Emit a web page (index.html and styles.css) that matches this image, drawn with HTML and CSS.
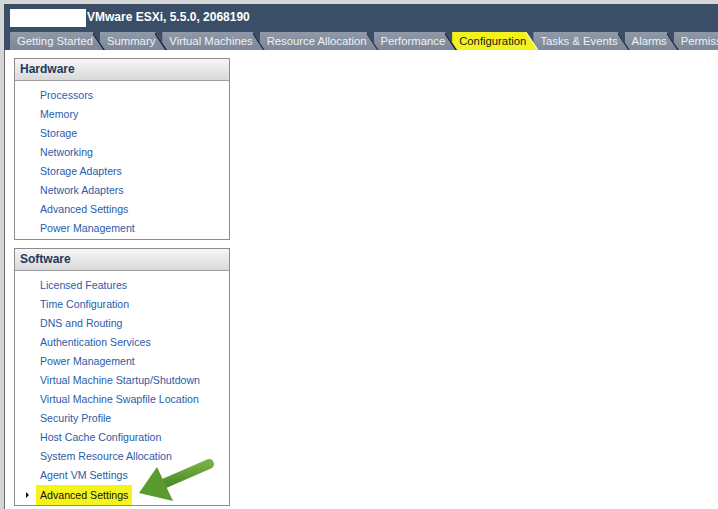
FILE: index.html
```html
<!DOCTYPE html>
<html>
<head>
<meta charset="utf-8">
<link rel="stylesheet" href="styles.css">
</head>
<body>
<div class="page">
  <header class="header">
    <div class="titlebar">
      <span class="redact"></span>
      <span class="title">VMware ESXi, 5.5.0, 2068190</span>
    </div>
    <nav class="tabs">
      <span class="tab">Getting Started</span>
      <span class="tab">Summary</span>
      <span class="tab">Virtual Machines</span>
      <span class="tab">Resource Allocation</span>
      <span class="tab">Performance</span>
      <span class="tab active">Configuration</span>
      <span class="tab">Tasks &amp; Events</span>
      <span class="tab">Alarms</span>
      <span class="tab">Permissions</span>
    </nav>
  </header>
  <main class="content">
    <section class="panel">
      <div class="panel-head">Hardware</div>
      <ul class="items">
        <li>Processors</li>
        <li>Memory</li>
        <li>Storage</li>
        <li>Networking</li>
        <li>Storage Adapters</li>
        <li>Network Adapters</li>
        <li>Advanced Settings</li>
        <li>Power Management</li>
      </ul>
    </section>
    <section class="panel">
      <div class="panel-head">Software</div>
      <ul class="items">
        <li>Licensed Features</li>
        <li>Time Configuration</li>
        <li>DNS and Routing</li>
        <li>Authentication Services</li>
        <li>Power Management</li>
        <li>Virtual Machine Startup/Shutdown</li>
        <li>Virtual Machine Swapfile Location</li>
        <li>Security Profile</li>
        <li>Host Cache Configuration</li>
        <li>System Resource Allocation</li>
        <li>Agent VM Settings</li>
        <li class="selected"><span class="marker"></span><span class="hl">Advanced Settings</span></li>
      </ul>
    </section>
  </main>
  <svg class="arrow" width="90" height="60" viewBox="130 455 90 60">
    <defs>
      <linearGradient id="g" x1="0" y1="0" x2="0" y2="1">
        <stop offset="0" stop-color="#74b043"/>
        <stop offset="1" stop-color="#4f8d27"/>
      </linearGradient>
    </defs>
    <line x1="209" y1="464" x2="163" y2="484" stroke="url(#g)" stroke-width="10" stroke-linecap="round"/>
    <polygon points="139,493 157,467 173,501" fill="#5a9a2f"/>
  </svg>
</div>
</body>
</html>
```
FILE: styles.css
```css
html, body {
  margin: 0;
  padding: 0;
}
body {
  background: #d5d5d5;
  font-family: "Liberation Sans", Arial, sans-serif;
  width: 718px;
  height: 509px;
  overflow: hidden;
}
.page {
  position: relative;
  margin: 4px 0 0 4px;
  height: 505px;
  display: flex;
  flex-direction: column;
  background: #fff;
}
.header {
  background: #3b4e68;
  height: 46px;
  display: flex;
  flex-direction: column;
}
.titlebar {
  height: 28px;
  display: flex;
  align-items: center;
  padding-left: 6px;
}
.redact {
  display: block;
  width: 76px;
  height: 18px;
  background: #fff;
  align-self: flex-start;
  margin-top: 5px;
}
.title {
  color: #fff;
  font-weight: bold;
  font-size: 12px;
  margin-left: 1px;
  margin-top: -2px;
}
.tabs {
  display: flex;
  height: 18px;
  padding-left: 6px;
  white-space: nowrap;
  overflow: hidden;
}
.tab {
  position: relative;
  display: flex;
  align-items: center;
  padding: 0 12px 1px 7px;
  margin-right: -5px;
  font-size: 11.3px;
  color: #eef1f5;
  background: linear-gradient(#8f99a8, #7b8697);
  clip-path: polygon(0 0, calc(100% - 12px) 0, 100% 100%, 0 100%);
}
.tab::after {
  content: "";
  position: absolute;
  right: 0;
  top: 0;
  width: 12px;
  height: 100%;
  background: linear-gradient(to top right, transparent calc(50% - 2px), #1e2a3a calc(50% - 1px), #1e2a3a 50%, transparent 51%);
}
.tab:nth-child(1) { z-index: 9; }
.tab:nth-child(2) { z-index: 8; }
.tab:nth-child(3) { z-index: 7; }
.tab:nth-child(4) { z-index: 6; }
.tab:nth-child(5) { z-index: 5; }
.tab:nth-child(6) { z-index: 4; }
.tab:nth-child(7) { z-index: 3; }
.tab:nth-child(8) { z-index: 2; }
.tab:nth-child(9) { z-index: 1; }
.tab.active {
  background: #f3f21e;
  color: #1a1a1a;
}
.tab.active::after {
  background: linear-gradient(to top right, transparent calc(50% - 1px), #ffffff 50%, #ffffff 100%);
}
.content {
  flex: 1;
  border-left: 1px solid #6f6f6f;
  padding: 8px 0 0 9px;
  display: flex;
  flex-direction: column;
  gap: 8px;
  align-items: flex-start;
}
.panel {
  width: 214px;
  border: 1px solid #8c8c8c;
}
.panel-head {
  height: 21px;
  line-height: 21px;
  padding-left: 5px;
  font-size: 12px;
  font-weight: bold;
  color: #1d3a5c;
  background: linear-gradient(#f6f6f6, #d9d9d9);
  border-bottom: 1px solid #a0a0a0;
}
.items {
  list-style: none;
  margin: 0;
  padding: 5px 0 1px 0;
}
.items li {
  height: 19px;
  line-height: 19px;
  font-size: 10.6px;
  color: #2c5ba8;
  padding-left: 25px;
  position: relative;
}
.items li.selected {
  padding-left: 11px;
  display: flex;
  align-items: center;
  color: #111;
}
.marker {
  display: block;
  width: 0;
  height: 0;
  border-left: 3px solid #111;
  border-top: 3px solid transparent;
  border-bottom: 3px solid transparent;
  margin-right: 11px;
}
.hl {
  background: #f4f41c;
  padding: 0 4px;
  margin-left: -4px;
  line-height: 20px;
}
.arrow {
  position: absolute;
  left: 126px;
  top: 451px;
}
```
